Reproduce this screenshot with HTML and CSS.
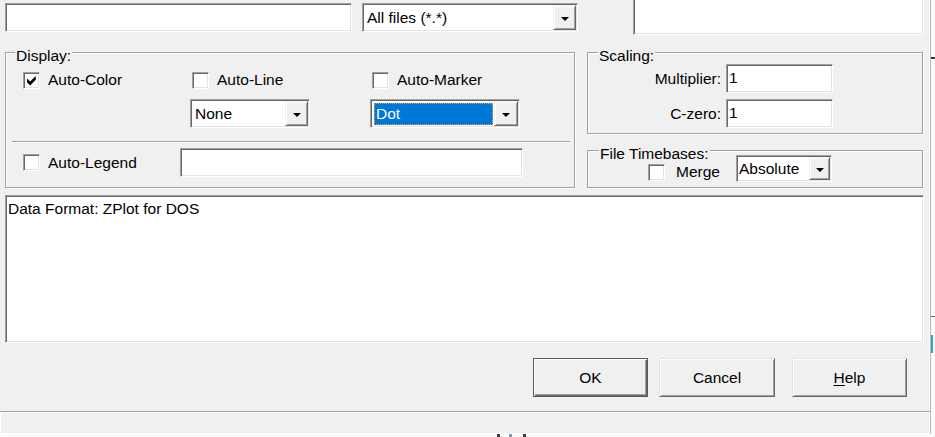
FILE: index.html
```html
<!DOCTYPE html>
<html>
<head>
<meta charset="utf-8">
<title>Open Data File</title>
<link rel="stylesheet" href="styles.css">
</head>
<body>
<div class="dialog">
  <div class="top-row">
    <div class="sunken file-name"></div>
    <div class="sunken combo filter">
      <span class="combo-text">All files (*.*)</span>
      <span class="drop"><i class="arrow"></i></span>
    </div>
    <div class="sunken listbox"></div>
  </div>

  <div class="mid-row">
    <section class="group display">
      <div class="group-title display-title">Display:</div>
      <div class="display-grid">
        <label class="check"><span class="sunken box"><svg width="15" height="15" viewBox="0 0 15 15"><polygon points="3,5.5 6.1,8.6 11.75,3 11.75,6.75 6.1,12.4 3,9.25" fill="#000"/></svg></span>Auto-Color</label>
        <label class="check col-shift"><span class="sunken box"></span>Auto-Line</label>
        <label class="check col-shift"><span class="sunken box"></span>Auto-Marker</label>
        <div class="empty"></div>
        <div class="sunken combo line-combo">
          <span class="combo-text">None</span>
          <span class="drop"><i class="arrow"></i></span>
        </div>
        <div class="sunken combo marker-combo">
          <span class="sel">Dot</span>
          <span class="drop wide"><i class="arrow"></i></span>
        </div>
      </div>
      <div class="sep"></div>
      <div class="legend-row">
        <label class="check legend-check"><span class="sunken box"></span>Auto-Legend</label>
        <div class="sunken legend-field"></div>
      </div>
    </section>

    <div class="right-col">
      <section class="group scaling">
        <div class="group-title">Scaling:</div>
        <div class="scale-grid">
          <span class="lbl">Multiplier:</span>
          <div class="sunken num">1</div>
          <span class="lbl">C-zero:</span>
          <div class="sunken num">1</div>
        </div>
      </section>
      <section class="group timebases">
        <div class="group-title tb-title">File Timebases:</div>
        <div class="tb-row">
          <label class="check merge"><span class="sunken box"></span>Merge</label>
          <div class="sunken combo abs-combo">
            <span class="combo-text">Absolute</span>
            <span class="drop narrow"><i class="arrow"></i></span>
          </div>
        </div>
      </section>
    </div>
  </div>

  <div class="sunken info">Data Format: ZPlot for DOS</div>

  <div class="buttons">
    <button class="btn default">OK</button>
    <button class="btn cancel">Cancel</button>
    <button class="btn help"><u>H</u>elp</button>
  </div>

  <div class="status"></div>
</div>

<div class="deco tick-a"></div>
<div class="deco tick-b"></div>
<div class="deco blue-edge"></div>
<div class="deco mark m1"></div>
<div class="deco mark m2"></div>
<div class="deco mark m3"></div>
</body>
</html>
```

FILE: styles.css
```css
* { box-sizing: border-box; }

html, body {
  margin: 0;
  padding: 0;
}

body {
  position: relative;
  width: 935px;
  height: 437px;
  overflow: hidden;
  background: #fbfbfb;
  font-family: "Liberation Sans", Arial, sans-serif;
  font-size: 15.5px;
  line-height: 18px;
  color: #000;
}

.dialog {
  width: 931px;
  height: 434px;
  padding-left: 5px;
  background: #f0f0f0;
  border-right: 1px solid #b8b8b8;
  box-shadow: inset -1px 0 0 #fafafa;
}

/* sunken 3D edge used by edits, list boxes, combos, checkboxes */
.sunken {
  background: #fff;
  border: 1px solid;
  border-color: #a0a0a0 #fff #fff #a0a0a0;
  box-shadow: inset 1px 1px 0 #696969, inset -1px -1px 0 #e3e3e3;
}

/* ---------- top row ---------- */
.top-row {
  display: flex;
  align-items: flex-start;
  height: 35px;
}

.file-name {
  margin-top: 3px;
  width: 347px;
  height: 29px;
}

.filter {
  margin-top: 3px;
  margin-left: 10px;
  width: 216px;
  height: 29px;
}

.listbox {
  margin-left: 55px;
  width: 291px;
  height: 35px;
  border-top: 0;
  box-shadow: inset 1px 0 0 #696969, inset -1px -1px 0 #e3e3e3;
}

/* ---------- combo box ---------- */
.combo {
  display: flex;
  align-items: stretch;
  padding: 1px;
}

.combo-text {
  flex: 1;
  display: flex;
  align-items: center;
  padding-left: 3px;
  white-space: nowrap;
  overflow: hidden;
}

.drop {
  flex: none;
  width: 23px;
  display: flex;
  align-items: center;
  justify-content: center;
  background: #f0f0f0;
  border: 1px solid;
  border-color: #f0f0f0 #696969 #696969 #f0f0f0;
  box-shadow: inset 1px 1px 0 #fff, inset -1px -1px 0 #a0a0a0;
}

.drop.wide { width: 24px; }
.drop.narrow { width: 21px; }

.arrow {
  display: block;
  width: 0;
  height: 0;
  margin-top: 3px;
  border-left: 4px solid transparent;
  border-right: 4px solid transparent;
  border-top: 4px solid #000;
}

.sel {
  flex: 1;
  display: flex;
  align-items: center;
  margin: 2px 1px 1px 2px;
  padding-left: 1px;
  background: #0078d7;
  color: #fff;
  border: 1px dotted #f0a040;
}

/* ---------- group boxes ---------- */
.group {
  border: 1px solid #a0a0a0;
  box-shadow: inset 1px 1px 0 #fff, 1px 1px 0 #fff;
}

.group-title {
  width: max-content;
  height: 18px;
  margin: -6px 0 -12px 10px;
  padding: 0 1px;
  background: #f0f0f0;
}

.display-title { margin-left: 9px; }
.tb-title { margin-left: 11px; }

.mid-row {
  display: flex;
  align-items: flex-start;
  margin-top: 17px;
}

.display {
  width: 570px;
  height: 136px;
}

.display-grid {
  display: grid;
  grid-template-columns: 167px 180px 150px;
  grid-template-rows: 18px 29px;
  row-gap: 10px;
  margin: 18px 0 0 17px;
}

.check {
  display: flex;
  align-items: center;
  height: 18px;
  white-space: nowrap;
}

.box {
  flex: none;
  width: 17px;
  height: 17px;
  margin-right: 8px;
  display: flex;
}

.box svg { display: block; }

.col-shift { margin-left: 2px; }

.line-combo { width: 120px; }
.marker-combo { width: 150px; }

.sep {
  height: 1px;
  margin: 13px 4px 0 6px;
  background: #a0a0a0;
  box-shadow: 0 1px 0 #fff;
}

.legend-row {
  display: flex;
  align-items: center;
  height: 29px;
  margin: 6px 0 0 17px;
}

.legend-check { width: 157px; }

.legend-field {
  width: 343px;
  height: 29px;
}

.right-col {
  width: 336px;
  margin-left: 12px;
}

.scaling { height: 82px; }

.scale-grid {
  display: grid;
  grid-template-columns: 133px 107px;
  grid-auto-rows: 29px;
  column-gap: 5px;
  row-gap: 6px;
  align-items: center;
  margin-top: 11px;
}

.lbl { text-align: right; }

.num {
  height: 29px;
  padding: 4px 0 0 2px;
}

.timebases {
  height: 38px;
  margin-top: 16px;
}

.tb-row {
  display: flex;
  align-items: flex-end;
  margin-top: 4px;
  padding-left: 60px;
}

.merge {
  width: 88px;
  margin-bottom: 1px;
}

.merge .box { margin-right: 11px; }

.abs-combo {
  width: 96px;
  height: 27px;
}

.abs-combo .combo-text { padding-left: 1px; }

/* ---------- info area ---------- */
.info {
  width: 919px;
  height: 148px;
  margin-top: 7px;
  padding: 4px 0 0 2px;
}

/* ---------- buttons ---------- */
.buttons {
  display: flex;
  margin-top: 15px;
  padding-left: 528px;
}

.btn {
  width: 115px;
  height: 39px;
  padding: 0;
  font: inherit;
  color: #000;
  background: #f0f0f0;
  border: 1px solid;
  border-color: #e3e3e3 #696969 #696969 #e3e3e3;
  box-shadow: inset 1px 1px 0 #fff, inset -1px -1px 0 #a0a0a0;
}

.btn.default {
  border-color: #5a5a5a;
  box-shadow: inset 1px 1px 0 #fff, inset -1px -1px 0 #696969, inset -2px -2px 0 #a0a0a0;
}

.btn.cancel {
  width: 116px;
  margin-left: 11px;
}

.btn.help { margin-left: 17px; }

.btn u { text-decoration-thickness: 1px; text-underline-offset: 2px; }

/* ---------- status bar ---------- */
.status {
  width: 930px;
  height: 23px;
  margin-top: 14px;
  margin-left: -5px;
  border-top: 1px solid #a0a0a0;
  border-bottom: 1px solid #fff;
  box-shadow: inset 1px 1px 0 #fff;
}

/* ---------- bits of windows behind the dialog ---------- */
.deco { position: absolute; }

.tick-a {
  left: 931px;
  top: 57px;
  width: 4px;
  height: 2px;
  background: #333;
}

.tick-b {
  left: 931px;
  top: 316px;
  width: 4px;
  height: 1px;
  background: #666;
}

.blue-edge {
  left: 931px;
  top: 335px;
  width: 2px;
  height: 18px;
  background: #3ba3c9;
}

.mark {
  top: 434px;
  width: 3px;
  height: 3px;
}

.m1 { left: 497px; background: #3a3a3a; }
.m2 { left: 509px; background: #8a96a8; }
.m3 { left: 523px; background: #3a3a3a; }
```
